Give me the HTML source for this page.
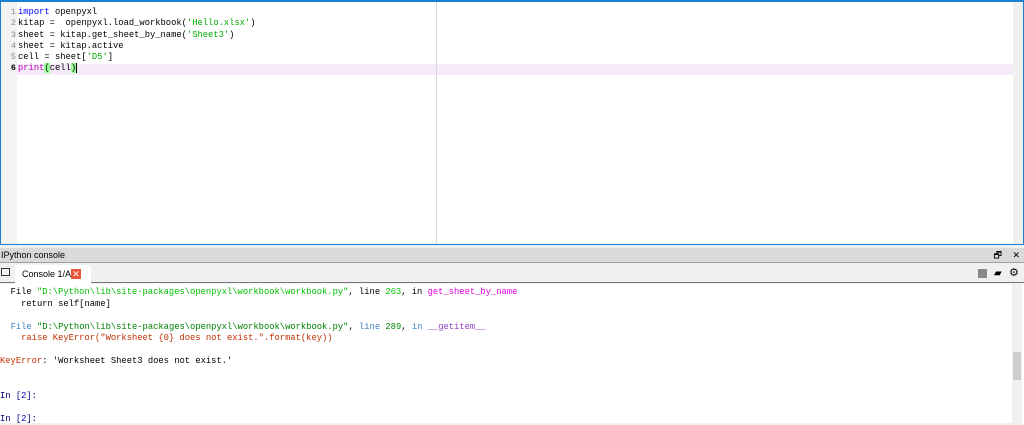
<!DOCTYPE html>
<html><head><meta charset="utf-8"><style>
*{margin:0;padding:0;box-sizing:border-box}
body{width:1024px;height:423px;overflow:hidden;background:#f0f0f0;font-family:"Liberation Mono",monospace;position:relative}
.ed{position:absolute;left:0;top:0;width:1024px;height:245px;border:1px solid #1e7fd0;border-top:2px solid #1e7fd0;background:#fff}
.gut{position:absolute;left:0;top:0;width:16px;height:100%;background:#f3f3f3}
.code{position:absolute;left:0;top:5px;font-size:8.8px;line-height:11.3px;white-space:pre}
.ln{display:inline-block;width:17px;text-align:right;padding-right:2px;color:#888;font-size:8.5px}
.hl{position:absolute;left:16px;top:62px;width:997px;height:11px;background:#f5eaf7}
.vl{position:absolute;left:435px;top:0;width:1px;height:100%;background:#d8d8d8}
.sb{position:absolute;right:0;top:0;width:10px;height:100%;background:#f0f0f0}
.kw{color:#0000ff}.st{color:#00aa00}.pr{color:#c000c0}
.title{position:absolute;left:0;top:248px;width:1024px;height:15px;background:#dadada;border-bottom:1px solid #a0a0a0;font-family:"Liberation Sans",sans-serif;font-size:9px;line-height:15px;padding-left:1px;color:#000}
.tabs{position:absolute;left:0;top:263px;width:1024px;height:20px;background:#f0f0f0;border-bottom:1px solid #777}
.tab{position:absolute;left:15px;top:2px;width:76px;height:19px;background:#fff;font-family:"Liberation Sans",sans-serif;font-size:9px;line-height:18px;padding-left:7px}
.x{position:absolute;left:56px;top:4px;width:10px;height:10px;background:#e8553a;color:#fff;font-size:9px;line-height:10px;text-align:center}
.con{position:absolute;left:0;top:284px;width:1024px;height:139px;background:#fff}
.ct{position:absolute;left:0;top:3px;font-size:8.8px;line-height:11.5px;white-space:pre;color:#000}
.g{color:#00c000}.m{color:#e000e0}.b{color:#4080c0}.r{color:#c03000}.n{color:#008000}.dk{color:#000080}
.csb{position:absolute;right:2px;top:0;width:10px;height:139px;background:#f0f0f0}
</style></head><body>
<div class="ed">
<div class="gut"></div>
<div class="hl"></div>
<div class="vl"></div>
<div class="sb"></div>
<div class="code"><span class="ln">1</span><span class="kw">import</span> openpyxl
<span class="ln">2</span>kitap =  openpyxl.load_workbook(<span class="st">'Hello.xlsx'</span>)
<span class="ln">3</span>sheet = kitap.get_sheet_by_name(<span class="st">'Sheet3'</span>)
<span class="ln">4</span>sheet = kitap.active
<span class="ln">5</span>cell = sheet[<span class="st">'D5'</span>]
<span class="ln" style="color:#000;font-weight:bold">6</span><span class="pr">print</span><span style="background:#9f9">(</span>cell<span style="background:#9f9">)</span><span style="border-left:1px solid #000"></span></div>
</div>
<div class="title">IPython console<span style="position:absolute;right:22px;font-size:9px">&#x1F5D7;</span><span style="position:absolute;right:4px">✕</span></div>
<div class="tabs">
<div style="position:absolute;left:1px;top:5px;width:9px;height:8px;border:1px solid #333"></div>
<div class="tab">Console 1/A<div class="x">✕</div></div>
<div style="position:absolute;left:978px;top:6px;width:9px;height:9px;background:#888"></div>
<div style="position:absolute;left:994px;top:5px;font-size:10px">▰</div>
<div style="position:absolute;left:1009px;top:3px;font-size:11px">⚙</div>
</div>
<div class="con">
<div class="ct">  File <span class="g">"D:\Python\lib\site-packages\openpyxl\workbook\workbook.py"</span>, line <span class="g">263</span>, in <span class="m">get_sheet_by_name</span>
    return self[name]

  <span class="b">File</span> <span class="n">"D:\Python\lib\site-packages\openpyxl\workbook\workbook.py"</span>, <span class="b">line</span> <span class="n">289</span>, <span class="b">in</span> <span style="color:#9040c0">__getitem__</span>
<span class="r">    raise KeyError("Worksheet {0} does not exist.".format(key))</span>

<span class="r">KeyError</span>: 'Worksheet Sheet3 does not exist.'


<span class="dk">In [</span><span style="color:#0000c0">2</span><span class="dk">]:</span>

<span class="dk">In [</span><span style="color:#0000c0">2</span><span class="dk">]:</span></div>
<div class="csb"><div style="position:absolute;top:68px;left:1px;width:8px;height:28px;background:#cdcdcd"></div></div>
</div>
</body></html>
